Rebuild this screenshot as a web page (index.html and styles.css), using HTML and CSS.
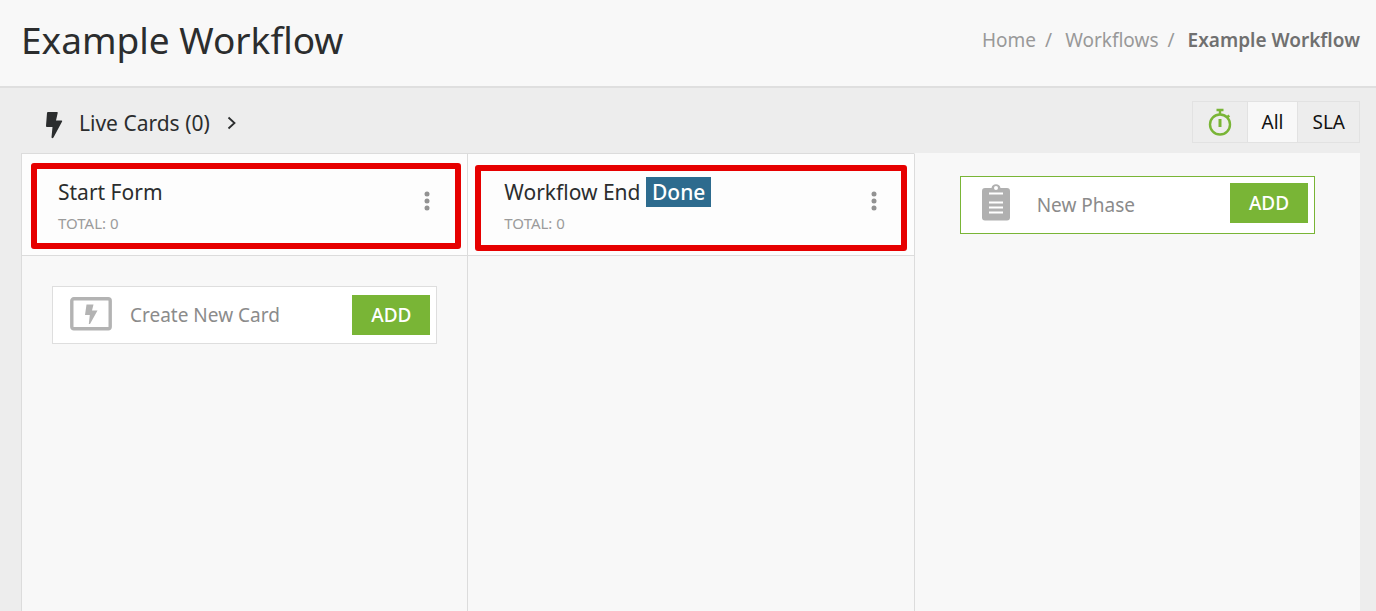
FILE: index.html
```html
<!DOCTYPE html>
<html lang="en">
<head>
    <meta charset="UTF-8">
    <meta name="viewport" content="width=device-width, initial-scale=1.0">
    <title>Example Workflow</title>
    <link rel="stylesheet" href="styles.css">
</head>
<body>
    <header class="page-header">
        <h1>Example Workflow</h1>
        <nav class="breadcrumb" aria-label="Breadcrumb">
            <a href="#">Home</a>
            <span class="sep">/</span>
            <a href="#">Workflows</a>
            <span class="sep">/</span>
            <strong>Example Workflow</strong>
        </nav>
    </header>

    <main class="content">
        <div class="toolbar">
            <button class="live-cards" type="button">
                <svg class="bolt" viewBox="0 0 18 28" aria-hidden="true">
                    <path fill="currentColor" d="M3 1h9q1 0 .7 1L11 9.500h5.500q1 0 .6 1L8.500 26.500q-1.500 1.500-2-.3L7.500 16H2q-1.200 0-1-1.200L2 2q.1-1 1-1z" />
                </svg>
                <span>Live Cards (0)</span>
                <svg class="chevron" viewBox="0 0 10 14" aria-hidden="true">
                    <path fill="none" stroke="currentColor" stroke-width="1.800" d="M1.500 1.500L7.500 7l-6 5.500" />
                </svg>
            </button>
            <div class="filters">
                <button type="button" class="filter timer" aria-label="Timer">
                    <svg viewBox="0 0 24 28" aria-hidden="true">
                        <g fill="none" stroke="currentColor">
                            <circle cx="12" cy="16.500" r="10" stroke-width="2.400" />
                            <path stroke-width="2.400" d="M8.500 2h7M12 2v4" />
                            <path stroke-width="3" d="M12 11v8" />
                            <path stroke-width="2.600" d="M18.500 9.800l2.800-2.300" />
                        </g>
                    </svg>
                </button>
                <button type="button" class="filter active">All</button>
                <button type="button" class="filter">SLA</button>
            </div>
        </div>

        <div class="board">
            <section class="phase">
                <div class="phase-header">
                    <div>
                        <h2>Start Form</h2>
                        <p class="total">TOTAL: 0</p>
                    </div>
                    <button class="menu" type="button" aria-label="Phase menu">
                        <svg viewBox="0 0 6 20" aria-hidden="true">
                            <g fill="currentColor">
                                <circle cx="3" cy="3" r="2.500" />
                                <circle cx="3" cy="10" r="2.500" />
                                <circle cx="3" cy="17" r="2.500" />
                            </g>
                        </svg>
                    </button>
                    <div class="highlight highlight-start"></div>
                </div>
                <form class="add-box add-card">
                    <svg class="card-icon" viewBox="0 0 42 34" aria-hidden="true">
                        <rect x="1.800" y="1.800" width="38.400" height="30" rx="2" fill="none" stroke="currentColor" stroke-width="3.400" />
                        <path fill="currentColor" d="M16.500 7.500h7L22 13.500h5.500L20 27h-1.200l1-9H15z" />
                    </svg>
                    <input type="text" placeholder="Create New Card" aria-label="Create New Card">
                    <button class="btn" type="button">ADD</button>
                </form>
            </section>

            <section class="phase">
                <div class="phase-header">
                    <div>
                        <h2>Workflow End <span class="badge">Done</span></h2>
                        <p class="total">TOTAL: 0</p>
                    </div>
                    <button class="menu" type="button" aria-label="Phase menu">
                        <svg viewBox="0 0 6 20" aria-hidden="true">
                            <g fill="currentColor">
                                <circle cx="3" cy="3" r="2.500" />
                                <circle cx="3" cy="10" r="2.500" />
                                <circle cx="3" cy="17" r="2.500" />
                            </g>
                        </svg>
                    </button>
                    <div class="highlight highlight-end"></div>
                </div>
            </section>

            <section class="phase new-phase">
                <form class="add-box add-phase">
                    <svg class="clip-icon" viewBox="0 0 28 38" aria-hidden="true">
                        <path fill="currentColor" fill-rule="evenodd" d="M3 5h6.500a4.600 4.600 0 0 1 9 0H25q3 0 3 3v26.500q0 3-3 3H3q-3 0-3-3V8q0-3 3-3zM14 3a2 2 0 1 0 0 4a2 2 0 1 0 0-4z" />
                        <path stroke="#fff" stroke-width="2.200" d="M7 10.500h14M7 19.500h14M7 24.500h14M7 29.500h14" />
                    </svg>
                    <input type="text" placeholder="New Phase" aria-label="New Phase">
                    <button class="btn" type="button">ADD</button>
                </form>
            </section>
        </div>
    </main>
</body>
</html>
```
FILE: styles.css
```css
* {
    box-sizing: border-box;
}
body {
    margin: 0;
    min-height: 100vh;
    display: flex;
    flex-direction: column;
    font-family: 'Noto Sans', 'Open Sans', sans-serif;
    font-size: 19px;
    color: #2b2d2e;
    background-color: #ededed;
}
h1, h2, p {
    margin: 0;
    font-weight: 400;
}
button, input {
    font-family: inherit;
    font-size: 19px;
    color: inherit;
    border: none;
    padding: 0;
    background: none;
}
button {
    cursor: pointer;
}
svg {
    display: block;
    flex: none;
}
.page-header {
    display: flex;
    justify-content: space-between;
    align-items: center;
    padding: 12px 16px 18px 21px;
    background-color: #f8f8f8;
    border-bottom: 2px solid #dfdfdf;
}
h1 {
    font-size: 37px;
    line-height: 56px;
}
.breadcrumb {
    display: flex;
    color: #999;
}
.breadcrumb a {
    color: #999;
    text-decoration: none;
}
.breadcrumb strong {
    font-weight: 600;
    color: #707070;
}
.sep {
    margin: 0 13px 0 9px;
}
.content {
    flex: 1;
    display: flex;
    flex-direction: column;
    padding: 0 16px 0 21px;
}
.toolbar {
    display: flex;
    justify-content: space-between;
    align-items: center;
    padding: 13px 0 10px 24px;
}
.live-cards {
    display: flex;
    align-items: center;
    padding-top: 2px;
    font-size: 21px;
}
.bolt {
    width: 18px;
    height: 28px;
    margin: 4px 16px 0 0;
}
.chevron {
    width: 10px;
    height: 14px;
    margin-left: 17px;
}
.filters {
    display: flex;
    border: 1px solid #e2e2e2;
}
.filter {
    height: 40px;
    padding: 0 14px;
    color: #111;
}
.filter + .filter {
    border-left: 1px solid #e2e2e2;
}
.filter.active {
    background-color: #f8f8f8;
}
.timer {
    padding: 0 15px;
    color: #79b536;
}
.timer svg {
    width: 24px;
    height: 28px;
}
.board {
    flex: 1;
    display: grid;
    grid-template-columns: repeat(3, minmax(0, 1fr));
    background-color: #f8f8f8;
}
.phase {
    border-top: 1px solid #dcdcdc;
    border-left: 1px solid #dcdcdc;
}
.phase-header {
    position: relative;
    display: flex;
    justify-content: space-between;
    align-items: flex-start;
    height: 102px;
    padding: 23px 37px 0 36px;
    background-color: #fdfdfd;
    border-bottom: 1px solid #dcdcdc;
}
h2 {
    font-size: 21px;
    line-height: 30px;
}
.total {
    margin-top: 6px;
    font-size: 15px;
    line-height: 20px;
    color: #9b9b9b;
}
.badge {
    display: inline-block;
    padding: 0 6px;
    font-weight: 500;
    color: #fff;
    background-color: #2d6b8e;
}
.menu {
    margin-top: 14px;
    color: #929292;
}
.menu svg {
    width: 6px;
    height: 20px;
}
/* red frames laid over the phase headers */
.highlight {
    position: absolute;
    border: 6px solid #e60000;
    border-radius: 3px;
    pointer-events: none;
}
.highlight-start {
    inset: 9px 6px 6px 9px;
}
.highlight-end {
    inset: 11px 7px 4px 7px;
}
.add-box {
    display: flex;
    align-items: center;
    height: 58px;
    padding: 0 6px 0 17px;
    background-color: #fff;
    border: 1px solid #dedede;
}
.add-box input {
    flex: 1;
    min-width: 0;
    height: 40px;
    outline: none;
}
.add-box input::placeholder {
    color: #8b8b8b;
    opacity: 1;
}
.add-card {
    margin: 30px;
}
.card-icon {
    width: 42px;
    height: 34px;
    margin: 0 18px 2px 0;
    color: #b3b3b3;
}
.new-phase {
    padding: 22px 45px;
    border-top-color: #f8f8f8;
}
.add-phase {
    padding-left: 21px;
    border-color: #79b536;
}
.clip-icon {
    width: 28px;
    height: 38px;
    margin: 0 27px 6px 0;
    color: #b0b0b0;
}
.btn {
    width: 78px;
    height: 40px;
    font-weight: 500;
    color: #fff;
    background-color: #79b536;
}
.add-phase .btn {
    margin-bottom: 4px;
}
```
